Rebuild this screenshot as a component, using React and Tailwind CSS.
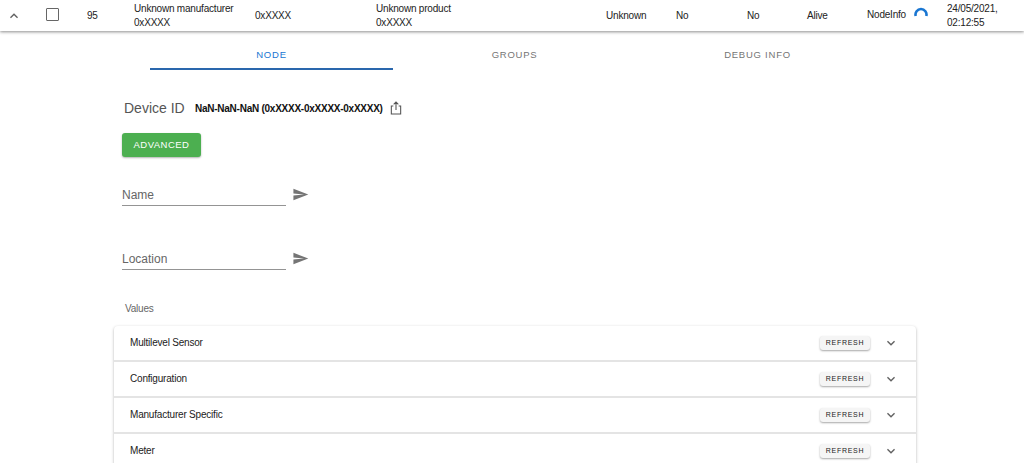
import React from "react";

const rows = ["Multilevel Sensor", "Configuration", "Manufacturer Specific", "Meter"];

const Send = () => (
  <svg viewBox="0 0 24 24" className="w-[17px] h-[17px] ml-[6px] mt-[5px] fill-[#757575]">
    <path d="M2.01 20 23 12 2.01 4 2 10.5l15 1.5-15 1.5z" />
  </svg>
);

const Chevron = ({ up }) => (
  <svg viewBox="0 0 24 24" className="w-[16px] h-[16px] fill-[#616161]">
    <path d={up ? "M7.41 15.41 12 10.83l4.59 4.58L18 14l-6-6-6 6z" : "M7.41 8.59 12 13.17l4.59-4.58L18 10l-6 6-6-6z"} />
  </svg>
);

const Field = ({ label, className }) => (
  <div className={`flex items-start ${className}`}>
    <div className="w-[164px] h-[25px] pt-[2px] border-b border-[#949494] text-[12px] tracking-normal leading-[25px] text-[#666]">{label}</div>
    <Send />
  </div>
);

const App = () => (
  <div className="w-[1024px] h-[463px] overflow-hidden bg-white font-['Liberation_Sans',sans-serif] text-[10px] tracking-[-0.2px] text-[#222]">
    <div className="h-[31px] flex items-center shadow-[0_1px_3px_rgba(0,0,0,0.45)] leading-[14px]">
      <div className="w-[46px] pl-[6px]"><Chevron up /></div>
      <div className="w-[41px] mb-[3px]"><div className="w-[13px] h-[13px] border-[1.5px] border-[#666] rounded-[1px]" /></div>
      <div className="w-[47px]">95</div>
      <div className="w-[121px]">Unknown manufacturer<br />0xXXXX</div>
      <div className="w-[121px]">0xXXXX</div>
      <div className="w-[230px]">Unknown product<br />0xXXXX</div>
      <div className="w-[70px]">Unknown</div>
      <div className="w-[71px]">No</div>
      <div className="w-[60px]">No</div>
      <div className="w-[60px]">Alive</div>
      <div className="w-[47px] mb-[1px]">NodeInfo</div>
      <svg viewBox="0 0 14 14" className="w-[14px] h-[14px] mb-[5px] fill-none stroke-[#1976d2]">
        <path d="M1.7 10 A5.5 5.5 0 1 1 12.3 10" strokeWidth="2.6" />
      </svg>
      <div className="ml-[19px] w-[70px]">24/05/2021,<br />02:12:55</div>
    </div>

    <div className="flex ml-[150px] h-[39px] text-[9.5px] tracking-[0.08em] text-[#757575]">
      <div className="w-[243px] flex items-start justify-center pt-[17px] border-b-2 border-[#2a67ad] text-[#1976d2]">NODE</div>
      <div className="w-[243px] flex items-start justify-center pt-[17px]">GROUPS</div>
      <div className="w-[243px] flex items-start justify-center pt-[17px]">DEBUG INFO</div>
    </div>

    <div className="pl-[122px]">
      <div className="flex items-center h-[24px] mt-[26px] pl-[2px]">
        <span className="w-[71px] text-[14px] tracking-normal text-[#555]">Device ID</span>
        <span className="font-bold tracking-[-0.25px] text-[#111]">NaN-NaN-NaN (0xXXXX-0xXXXX-0xXXXX)</span>
        <svg viewBox="0 0 24 24" className="w-[16px] h-[16px] ml-[5px] fill-none stroke-[#555] stroke-[1.6]">
          <path d="M8 9H5v12h14V9h-3M12 15V3M8.5 6.5 12 3l3.5 3.5" />
        </svg>
      </div>
      <div className="mt-[13px] w-[79px] h-[24px] rounded-[3px] bg-[#4caf50] text-white text-[9.5px] tracking-[0.05em] flex items-center justify-center shadow-[0_1px_2px_rgba(0,0,0,0.3)]">
        ADVANCED
      </div>
      <Field label="Name" className="mt-[24px]" />
      <Field label="Location" className="mt-[39px]" />
      <div className="mt-[31px] pl-[3px] text-[#666]">Values</div>
    </div>

    <div className="w-[802px] ml-[114px] mt-[10px] rounded-t-[4px] shadow-[0_1px_3px_rgba(0,0,0,0.3)]">
      {rows.map((row) => (
        <div key={row} className="h-[36px] flex items-center pl-[16px] border-b-2 border-[#e4e4e4]">
          <span className="flex-1 mb-[1px]">{row}</span>
          <span className="w-[50px] h-[14px] rounded-[3px] bg-[#f5f5f5] shadow-[0_1px_2px_rgba(0,0,0,0.35)] flex items-center justify-center text-[7px] tracking-[0.1em]">REFRESH</span>
          <span className="ml-[13px] mr-[17px]"><Chevron /></span>
        </div>
      ))}
    </div>
  </div>
);

export default App;
